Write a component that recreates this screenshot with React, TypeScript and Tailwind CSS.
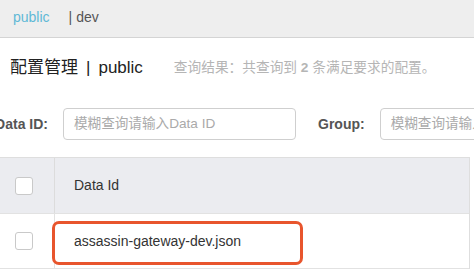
const font = { fontFamily: '"Liberation Sans", "Noto Sans CJK SC", sans-serif' }

function Checkbox() {
  return <div className="w-[18px] h-[18px] rounded-[3px] border border-[#c9c9c9] bg-white" />
}

export default function App() {
  return (
    <div style={font} className="w-[474px] h-[274px] overflow-hidden bg-white text-[#333]">
      {/* Namespace bar */}
      <div className="h-[38px] bg-[#eeeeee] border-b border-[#d4d4d4] flex items-center pl-[13px] text-[14px] pb-[2px]">
        <span className="text-[#5fb9d6]">public</span>
        <span className="ml-[19px] text-[#555]">|</span>
        <span className="ml-[4px] text-[#555]">dev</span>
      </div>

      {/* Title */}
      <div className="mt-[18px] h-[24px] flex items-center pl-[10px] whitespace-nowrap">
        <span className="text-[17px] text-[#222]">配置管理</span>
        <span className="text-[17px] text-[#222] ml-[8px]">|</span>
        <span className="text-[17px] text-[#222] ml-[8px]">public</span>
        <span className="ml-[31px] text-[13.7px] text-[#b5b5b5]">
          查询结果：共查询到 <b className="font-bold">2</b> 条满足要求的配置。
        </span>
      </div>

      {/* Search */}
      <div className="mt-[28px] flex items-center whitespace-nowrap">
        <div className="w-[48px] shrink-0 flex justify-end">
          <span className="text-[14px] font-bold text-[#555]">Data ID:</span>
        </div>
        <div className="ml-[15px] w-[233px] shrink-0 h-[32px] border border-[#cfcfcf] rounded-[4px] flex items-center pl-[10px] text-[13.6px] text-[#aaa]">
          模糊查询请输入Data ID
        </div>
        <span className="ml-[22px] shrink-0 text-[14px] font-bold text-[#555]">Group:</span>
        <div className="ml-[15px] w-[200px] shrink-0 h-[32px] border border-[#cfcfcf] rounded-[4px] flex items-center pl-[10px] text-[13.6px] text-[#aaa]">
          模糊查询请输入Group
        </div>
      </div>

      {/* Table */}
      <div className="mt-[17px] w-[470px] border-t border-r border-[#dedede]">
        <div className="flex h-[56px] bg-[#ebecf0] border-b border-[#e2e2e2]">
          <div className="w-[55px] border-r border-[#dcdcdc] flex items-center pl-[15px] pt-[1px]">
            <Checkbox />
          </div>
          <div className="flex items-center pl-[19px] text-[14px] text-[#333]">Data Id</div>
        </div>
        <div className="relative flex h-[55px] border-b border-[#e2e2e2]">
          <div className="w-[55px] border-r border-[#e2e2e2] flex items-center pl-[15px]">
            <Checkbox />
          </div>
          <div className="flex items-center pl-[19px] text-[14px] text-[#333]">assassin-gateway-dev.json</div>
          <div className="absolute left-[52px] top-[7px] w-[251px] h-[44px] border-[3px] border-[#e8552d] rounded-[7px]" />
        </div>
      </div>
    </div>
  )
}
